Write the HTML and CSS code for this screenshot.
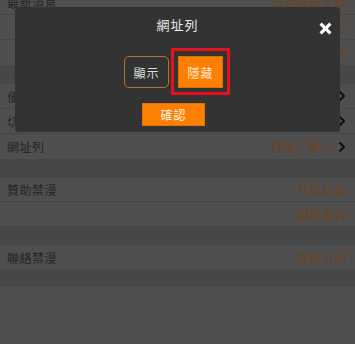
FILE: index.html
```html
<!DOCTYPE html>
<html lang="zh-Hant">
<head>
<meta charset="utf-8">
<link rel="stylesheet" href="styles.css">
</head>
<body>
<div class="page">
  <div class="list">
    <div class="row first"><span class="label">最新消息</span><span class="value">查看連結文章</span></div>
    <div class="row"><span class="label"></span><span class="value">觀看廣告</span></div>
    <div class="row last"><span class="label"></span><span class="value">設為首頁</span></div>
    <div class="band"></div>
    <div class="row"><span class="label">便捷登入</span><span class="value">開啟</span><svg class="chev" viewBox="0 0 8 12"><polyline points="1.5,1.5 6,6 1.5,10.5"/></svg></div>
    <div class="row"><span class="label">切換語言</span><span class="value">繁體中文</span><svg class="chev" viewBox="0 0 8 12"><polyline points="1.5,1.5 6,6 1.5,10.5"/></svg></div>
    <div class="row last"><span class="label">網址列</span><span class="value">隱藏 / 顯示</span><svg class="chev" viewBox="0 0 8 12"><polyline points="1.5,1.5 6,6 1.5,10.5"/></svg></div>
    <div class="band"></div>
    <div class="row sm"><span class="label">贊助禁漫</span><span class="value">打賞禁漫</span></div>
    <div class="row sm last"><span class="label"></span><span class="value">觀看廣告</span></div>
    <div class="band"></div>
    <div class="row sm last"><span class="label">聯絡禁漫</span><span class="value">廣告洽詢</span></div>
    <div class="band short"></div>
    <div class="rest"></div>
    <div class="strip"></div>
  </div>

  <div class="modal">
    <div class="modal-title">網址列</div>
    <svg class="close" viewBox="0 0 12 12"><line x1="1.5" y1="1.5" x2="10.5" y2="10.5"/><line x1="10.5" y1="1.5" x2="1.5" y2="10.5"/></svg>
    <div class="choices">
      <button class="btn outline">顯示</button>
      <div class="highlight-wrap">
        <button class="btn solid">隱藏</button>
        <span class="highlight"></span>
      </div>
    </div>
    <div class="confirm-row">
      <button class="btn confirm">確認</button>
    </div>
  </div>
</div>
</body>
</html>
```

FILE: styles.css
```css
* { box-sizing: border-box; }
html, body {
  margin: 0;
  padding: 0;
  background: #4e4e4e;
  font-family: "Noto Sans CJK TC", "Noto Sans", sans-serif;
}
.page {
  position: relative;
  width: 355px;
  height: 344px;
  overflow: hidden;
}
.list {
  display: flex;
  flex-direction: column;
  margin-top: -10px;
}
.row {
  height: 25px;
  display: flex;
  align-items: center;
  padding: 0 8px 0 7px;
  background: #4f4f4f;
  border-bottom: 1px solid #464646;
  font-size: 12px;
}
.row.sm { height: 24px; }
.row.last { border-bottom: none; }
.label {
  color: #252525;
  flex: 1;
  letter-spacing: 0.5px;
}
.value {
  color: #6a4423;
  letter-spacing: 0.5px;
}
.chev {
  width: 8px;
  height: 12px;
  margin-left: 5px;
  margin-right: 1px;
  fill: none;
  stroke: #0f0f0f;
  stroke-width: 2;
}
.band {
  height: 19px;
  background: #474747;
}
.band.short { height: 18px; }
.rest {
  height: 57px;
  background: #4e4e4e;
}
.strip {
  height: 2px;
  background: #303030;
}
.modal {
  position: absolute;
  left: 15px;
  top: 7px;
  width: 325px;
  height: 125px;
  background: #333333;
  border-radius: 4px;
  padding-top: 9px;
  display: flex;
  flex-direction: column;
  align-items: center;
}
.modal-title {
  color: #ececec;
  font-size: 13px;
  line-height: 18px;
  letter-spacing: 1px;
}
.close {
  position: absolute;
  right: 8px;
  top: 15px;
  width: 13px;
  height: 13px;
  stroke: #ffffff;
  stroke-width: 3;
}
.choices {
  display: flex;
  gap: 9px;
  margin-top: 22px;
  padding-right: 8px;
}
.btn {
  font-family: inherit;
  font-size: 12px;
  letter-spacing: 1px;
  border-radius: 3px;
  padding: 0;
  cursor: pointer;
}
.outline {
  width: 45px;
  height: 32px;
  background: transparent;
  border: 1px solid #b86f2c;
  color: #dcdcdc;
  border-radius: 5px;
}
.solid {
  width: 45px;
  height: 32px;
  background: #ff8000;
  border: 1px solid #d96e05;
  color: #ffe9d6;
  border-radius: 0;
}
.highlight-wrap {
  position: relative;
  display: flex;
}
.highlight {
  position: absolute;
  left: -7px;
  right: -7px;
  top: -8px;
  bottom: -7px;
  border: 3px solid #e3121c;
  pointer-events: none;
}
.confirm-row {
  margin-top: 13px;
  padding-right: 8px;
}
.confirm {
  width: 63px;
  height: 23px;
  background: #ff8000;
  border: 1px solid #e07008;
  color: #fff3e8;
  border-radius: 0;
}
```
